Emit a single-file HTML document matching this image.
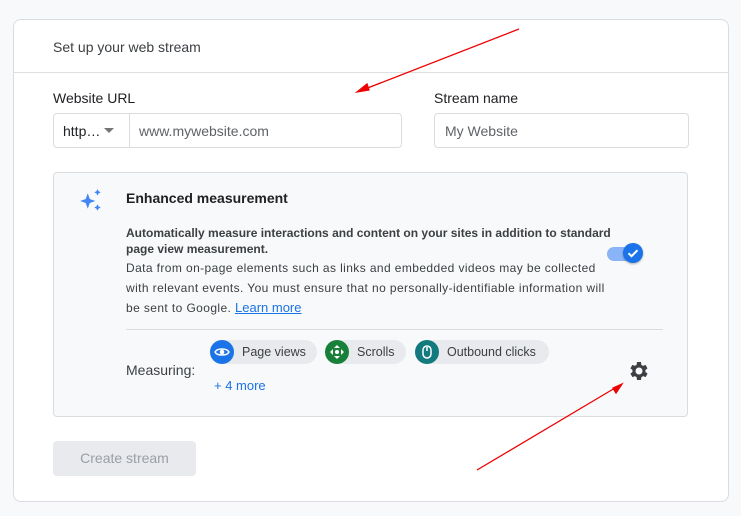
<!DOCTYPE html>
<html><head><style>
body{margin:0;width:741px;height:516px;background:#f8f9fa;font-family:"Liberation Sans",Arial,sans-serif;color:#3c4043;position:relative;overflow:hidden}
.a{position:absolute}
.card{left:13px;top:19px;width:714px;height:481px;background:#fff;border:1px solid #dadce0;border-radius:8px}
.inp{border:1px solid #dadce0;border-radius:4px;background:#fff;height:33px}
.chip{height:24px;border-radius:12px;background:#e8eaed;font-size:12.5px;color:#3c4043;display:flex;align-items:center}
.ci{width:24px;height:24px;border-radius:12px;display:flex;align-items:center;justify-content:center;margin-right:8px}
</style></head><body>
<div class="a card"></div>
<div class="a" style="left:53px;top:39px;font-size:14px;color:#3c4043">Set up your web stream</div>
<div class="a" style="left:13px;top:72px;width:716px;height:1px;background:#e0e0e0"></div>
<div class="a" style="left:53px;top:90px;font-size:14px;color:#202124">Website URL</div>
<div class="a" style="left:434px;top:90px;font-size:14px;color:#202124">Stream name</div>
<div class="a inp" style="left:53px;top:113px;width:347px"></div>
<div class="a" style="left:129px;top:114px;width:1px;height:33px;background:#dadce0"></div>
<div class="a" style="left:63px;top:123px;font-size:14px;color:#202124">http…</div>
<div class="a" style="left:104px;top:128px;border-left:5px solid transparent;border-right:5px solid transparent;border-top:5px solid #757575"></div>
<div class="a" style="left:139px;top:123px;font-size:14px;color:#5f6368">www.mywebsite.com</div>
<div class="a inp" style="left:434px;top:113px;width:253px"></div>
<div class="a" style="left:445px;top:123px;font-size:14px;color:#5f6368">My Website</div>
<div class="a" style="left:53px;top:172px;width:633px;height:243px;background:#f8f9fa;border:1px solid #dadce0;border-radius:4px"></div>
<svg class="a" style="left:78px;top:188px" width="26" height="26" viewBox="0 0 24 24"><path fill="#4285f4" d="M9 5l1.9 5.1L16 12l-5.1 1.9L9 19l-1.9-5.1L2 12l5.1-1.9zM18 1l1 2 2 1-2 1-1 2-1-2-2-1 2-1zM18 15l1 2 2 1-2 1-1 2-1-2-2-1 2-1z"/></svg>
<div class="a" style="left:126px;top:190px;font-size:14px;font-weight:bold;color:#202124">Enhanced measurement</div>
<div class="a" style="left:126px;top:225px;width:490px;font-size:12px;font-weight:bold;line-height:16px;color:#3c4043">Automatically measure interactions and content on your sites in addition to standard page view measurement.</div>
<div class="a" style="left:126px;top:258px;white-space:nowrap;font-size:12px;line-height:20px;letter-spacing:0.4px;color:#3c4043">Data from on-page elements such as links and embedded videos may be collected<br>with relevant events. You must ensure that no personally-identifiable information will<br>be sent to Google. <span style="color:#1a73e8;text-decoration:underline;font-size:13px;letter-spacing:0">Learn more</span></div>
<div class="a" style="left:607px;top:247px;width:34px;height:14px;border-radius:7px;background:#8ab4f8"></div>
<div class="a" style="left:623px;top:243px;width:20px;height:20px;border-radius:10px;background:#1a73e8;box-shadow:0 1px 2px rgba(0,0,0,.3)"><svg width="20" height="20" viewBox="0 0 20 20"><path d="M5.5 10.2l3 3 6-6" stroke="#fff" stroke-width="2" fill="none"/></svg></div>
<div class="a" style="left:126px;top:329px;width:537px;height:1px;background:#dadce0"></div>
<div class="a" style="left:126px;top:362px;font-size:14px;color:#3c4043">Measuring:</div>
<div class="a chip" style="left:210px;top:340px;width:107px"><div class="ci" style="background:#1a73e8"><svg width="16" height="16" viewBox="0 0 16 16"><path d="M1 8c2-4 12-4 14 0-2 4-12 4-14 0z" stroke="#fff" stroke-width="1.5" fill="none"/><circle cx="8" cy="8" r="2.3" fill="#fff"/></svg></div>Page views</div>
<div class="a chip" style="left:325px;top:340px;width:81px"><div class="ci" style="background:#188038"><svg width="16" height="16" viewBox="0 0 16 16"><path d="M8 1l3 3H5zM8 15l-3-3h6zM1 8l3-3v6zM15 8l-3 3V5z" fill="#fff"/><circle cx="8" cy="8" r="2" fill="#fff"/></svg></div>Scrolls</div>
<div class="a chip" style="left:415px;top:340px;width:134px"><div class="ci" style="background:#137a7f"><svg width="16" height="16" viewBox="0 0 16 16"><rect x="4" y="2" width="8" height="12" rx="4" stroke="#fff" stroke-width="1.5" fill="none"/><path d="M8 3v4" stroke="#fff" stroke-width="1.5"/></svg></div>Outbound clicks</div>
<div class="a" style="left:214px;top:378px;font-size:13px;color:#1a73e8">+ 4 more</div>
<svg class="a" style="left:627px;top:359px" width="24" height="24" viewBox="0 0 24 24"><path fill="#3c4043" d="M19.4 13a7.5 7.5 0 000-2l2.1-1.6-2-3.5-2.5 1a7.5 7.5 0 00-1.7-1L15 3h-4l-.4 2.9a7.5 7.5 0 00-1.7 1l-2.5-1-2 3.5L6.5 11a7.5 7.5 0 000 2l-2.1 1.6 2 3.5 2.5-1a7.5 7.5 0 001.7 1L11 21h4l.4-2.9a7.5 7.5 0 001.7-1l2.5 1 2-3.5zM13 15.5a3.5 3.5 0 110-7 3.5 3.5 0 010 7z" transform="translate(-1 0)"/></svg>
<div class="a" style="left:53px;top:441px;width:143px;height:35px;border-radius:4px;background:#e8eaed;color:#9aa0a6;font-size:14px;line-height:35px;text-align:center">Create stream</div>
<svg class="a" style="left:0;top:0" width="741" height="516"><g stroke="#e00" stroke-width="1.3" fill="#e00"><line x1="519" y1="29" x2="365" y2="89"/><path d="M357 92l10-8 2 6z"/><line x1="477" y1="470" x2="615" y2="388"/><path d="M622 384l-6 9-3-5z"/></g></svg>
</body></html>
